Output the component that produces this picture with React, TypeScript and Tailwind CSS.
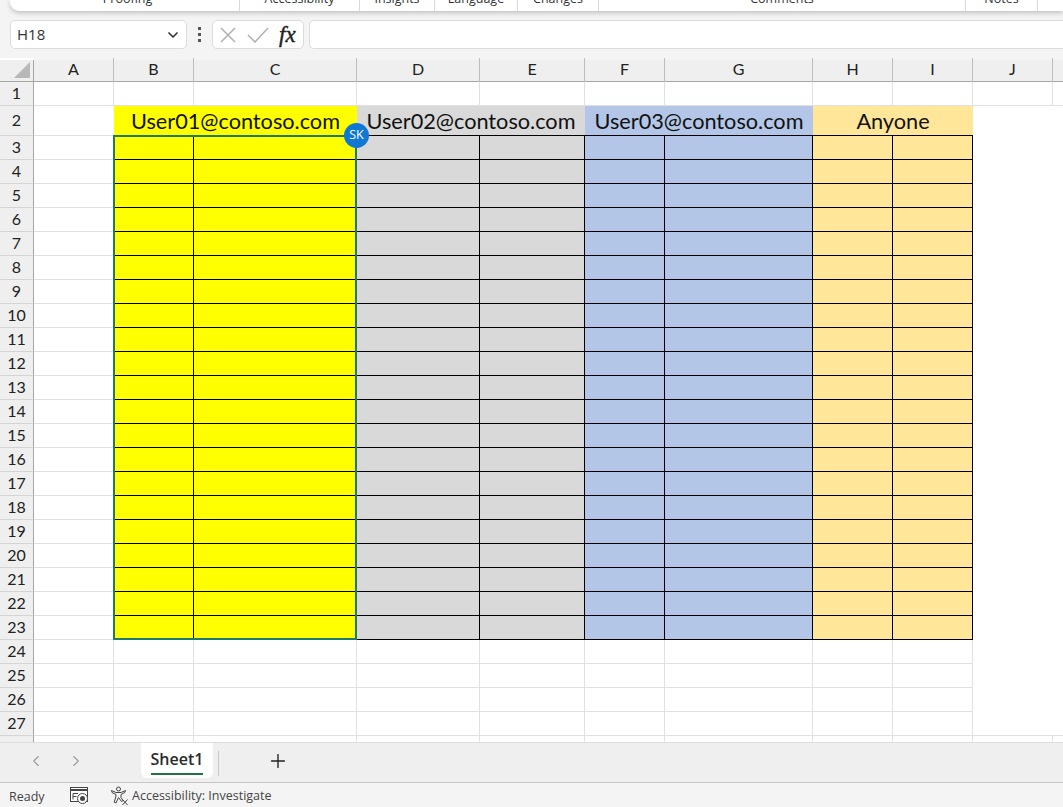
import { Plus, ChevronDown, ChevronLeft, ChevronRight } from "lucide-react";

const ribbonGroups = [
  { label: "Proofing", width: "w-[230px]", pad: "pl-[6px]" },
  { label: "Accessibility", width: "w-[120px]", pad: "" },
  { label: "Insights", width: "w-[75px]", pad: "" },
  { label: "Language", width: "w-[83px]", pad: "" },
  { label: "Changes", width: "w-[81px]", pad: "" },
  { label: "Comments", width: "w-[367px]", pad: "" },
  { label: "Notes", width: "w-[72px]", pad: "" },
];

const columns = ["A", "B", "C", "D", "E", "F", "G", "H", "I", "J"];

const gridLine = "border-r border-b border-[#e1e1e1]";
const blackLine = "border-r border-b border-black";

const fills = ["", "bg-[#ffff00]", "bg-[#ffff00]", "bg-[#d9d9d9]", "bg-[#d9d9d9]", "bg-[#b4c6e7]", "bg-[#b4c6e7]", "bg-[#ffe699]", "bg-[#ffe699]"];

const owners = [
  { text: "User01@contoso.com", fill: "bg-[#ffff00]", align: "justify-end pr-[17px]" },
  { text: "User02@contoso.com", fill: "bg-[#d9d9d9]", align: "justify-center" },
  { text: "User03@contoso.com", fill: "bg-[#b4c6e7]", align: "justify-center" },
  { text: "Anyone", fill: "bg-[#ffe699]", align: "justify-center" },
];

function RowHeader({ n }: { n: number }) {
  return (
    <div className="flex items-center justify-center border-r border-b border-r-[#a6a6a6] border-b-[#d4d4d4] bg-[#efefef] pb-[2px] text-[16px] leading-none text-[#222]">
      {n}
    </div>
  );
}

function AccessibilityIcon() {
  return (
    <svg width="20" height="20" viewBox="0 0 20 20" fill="none" stroke="#444" strokeWidth="1">
      <circle cx="8.5" cy="3" r="2" />
      <path d="M1.5 4.5 6 6.5h5l4.5-2-.7 2L11 8.5v3l2 3-1.5 1-3-4-2.500 5.500-1.800-.8L6 10V8.500L2 6.500z" />
      <path d="M12.500 13.500l5 5.500M17.500 13.500l-5 5.500" />
    </svg>
  );
}

function MacroIcon() {
  return (
    <svg width="19" height="18" viewBox="0 0 19 18" fill="none" stroke="#444" strokeWidth="1">
      <rect x="0.500" y="0.500" width="17" height="14" fill="#fff" />
      <path d="M0.500 3h17" strokeWidth="2" />
      <path d="M3 6.500h5M3 6.500v6M3 9.500h3.500" />
      <circle cx="12.500" cy="11.500" r="5" fill="#fff" />
      <circle cx="12.500" cy="11.500" r="2.500" fill="#444" stroke="none" />
    </svg>
  );
}

export default function App() {
  return (
    <div className="flex h-[807px] w-[1063px] flex-col overflow-hidden bg-[#f4f4f4] font-['Open_Sans',sans-serif]">
      <div className="ml-[10px] flex h-[11px] shrink-0 items-end overflow-hidden rounded-bl-[9px] bg-white shadow-[0_2px_5px_rgba(0,0,0,0.22)]">
        {ribbonGroups.map((g) => (
          <div
            key={g.label}
            className={`flex h-[11px] shrink-0 items-end justify-center border-r border-[#d8d8d8] ${g.width} ${g.pad}`}
          >
            <span className="-translate-y-[2px] whitespace-nowrap text-[12.500px] leading-[20px] text-[#333]">{g.label}</span>
          </div>
        ))}
      </div>

      <div className="flex h-[47px] shrink-0 items-end pb-[9px] pl-[10px]">
        <div className="flex h-[29px] w-[177px] items-center justify-between rounded-[5px] border border-[#dcdcdc] bg-white pr-[5px] pl-[6px] text-[15px] text-[#333]">
          H18
          <ChevronDown size={16} strokeWidth={2.500} color="#333" />
        </div>
        <div className="flex h-[29px] w-[25px] flex-col items-center justify-center gap-[3px]">
          <span className="h-[3px] w-[3px] bg-[#555]" />
          <span className="h-[3px] w-[3px] bg-[#555]" />
          <span className="h-[3px] w-[3px] bg-[#555]" />
        </div>
        <div className="flex h-[29px] w-[92px] items-center rounded-[5px] border border-[#dcdcdc] bg-white pl-[7px]">
          <svg width="16" height="16" viewBox="0 0 16 16" stroke="#b0b0b0" strokeWidth="1.500" fill="none">
            <path d="M1 1l14 14M15 1 1 15" />
          </svg>
          <svg width="22" height="16" viewBox="0 0 22 16" stroke="#b0b0b0" strokeWidth="1.500" fill="none" className="ml-[11px]">
            <path d="M1 8l7 7L21 1" />
          </svg>
          <span className="ml-[10px] font-['Liberation_Serif',serif] text-[23px] leading-none text-[#222] italic [-webkit-text-stroke:0.4px_#222]">fx</span>
        </div>
        <div className="ml-[5px] h-[29px] flex-1 rounded-l-[5px] border border-r-0 border-[#dcdcdc] bg-white" />
      </div>

      <div className="relative grid flex-1 grid-cols-[34px_80px_80px_163px_123px_105px_80px_148px_80px_80px_80px_1fr] grid-rows-[24px_24px_30px_repeat(25,24px)] overflow-hidden bg-white font-['Lato',sans-serif]">
        {/* header row */}
        <div className="mt-[2px] flex items-end justify-end border-r border-b border-r-[#a6a6a6] border-b-[#a6a6a6] bg-[#efefef] pr-[3px] pb-[3px]">
          <svg width="16" height="16" viewBox="0 0 16 16">
            <path d="M16 0v16H0z" fill="#b8b8b8" />
          </svg>
        </div>
        {columns.map((c) => (
          <div
            key={c}
            className="flex items-center justify-center border-r border-r-[#bdbdbd] bg-[linear-gradient(#f4f4f4_2px,#efefef_2px)] pb-[3px] text-[16px] leading-none text-[#222] shadow-[inset_0_-1px_#a6a6a6]"
          >
            {c}
          </div>
        ))}
        <div className="bg-[linear-gradient(#f4f4f4_2px,#efefef_2px)] shadow-[inset_0_-1px_#a6a6a6]" />

        {/* row 1 */}
        <RowHeader n={1} />
        {columns.map((c) => (
          <div key={c} className={gridLine} />
        ))}
        <div className="border-b border-[#e1e1e1]" />

        {/* row 2 with the owner cells */}
        <RowHeader n={2} />
        <div className="border-b border-b-[#e1e1e1]" />
        {owners.map((o) => (
          <div
            key={o.text}
            className={`col-span-2 flex items-center border-b border-black pt-[3px] text-[21.700px] leading-none text-[#111] ${o.fill} ${o.align}`}
          >
            {o.text}
          </div>
        ))}
        <div className="col-span-2" />

        {/* rows 3 to 23 */}
        {Array.from({ length: 21 }, (_, r) => (
          <div key={r} className="contents">
            <RowHeader n={r + 3} />
            <div className="border-r border-b border-r-black border-b-[#e1e1e1]" />
            {fills.slice(1).map((f, i) => (
              <div key={i} className={`${blackLine} ${f}`} />
            ))}
            <div className="col-span-2" />
          </div>
        ))}

        {/* rows 24 to 27 */}
        {[24, 25, 26, 27].map((n) => (
          <div key={n} className="contents">
            <RowHeader n={n} />
            {fills.map((_, i) => (
              <div key={i} className={gridLine} />
            ))}
            <div className={`col-span-2 ${n === 27 ? "border-b border-[#e1e1e1]" : ""}`} />
          </div>
        ))}

        {/* row 28, cut by the tab bar */}
        <div className="border-r border-r-[#a6a6a6] bg-[#efefef]" />
        {columns.map((c) => (
          <div key={c} className="border-r border-[#e1e1e1]" />
        ))}

        <div className="pointer-events-none absolute top-[77px] left-[113px] h-[505px] w-[244px] border-2 border-[#1f7a6c]" />
        <div className="absolute top-[65px] left-[344px] flex h-[25px] w-[25px] items-center justify-center rounded-full bg-[#0f78d4] font-['Open_Sans',sans-serif] text-[12.500px] text-white">
          SK
        </div>
      </div>

      <div className="flex h-[40px] shrink-0 items-start border-t border-[#dedede] bg-[#efefef]">
        <div className="flex h-[35px] w-[141px] items-center pl-[27px] text-[#9a9a9a]">
          <ChevronLeft size={18} strokeWidth={1.500} />
          <ChevronRight size={18} strokeWidth={1.500} className="ml-[22px]" />
        </div>
        <div className="flex h-[35px] w-[72px] flex-col items-center justify-end rounded-b-[6px] bg-white pb-[3px]">
          <span className="-translate-y-[1px] text-[16px] leading-[24px] font-semibold text-[#2b2b2b]">Sheet1</span>
          <span className="mt-[1px] h-[2px] w-[52px] bg-[#217346]" />
        </div>
        <div className="mt-[8px] ml-[5px] h-[25px] w-px bg-[#c8c8c8]" />
        <Plus size={22} strokeWidth={1.500} color="#222" className="mt-[7px] ml-[48px]" />
      </div>

      <div className="flex h-[25px] shrink-0 items-center border-t border-[#c6c6c6] bg-[#f4f4f4] pt-[2px] text-[12.500px] text-[#444]">
        <span className="ml-[9px] w-[61px] translate-y-[1px]">Ready</span>
        <MacroIcon />
        <span className="ml-[21px]">
          <AccessibilityIcon />
        </span>
        <span className="ml-[2px]">Accessibility: Investigate</span>
      </div>
    </div>
  );
}
